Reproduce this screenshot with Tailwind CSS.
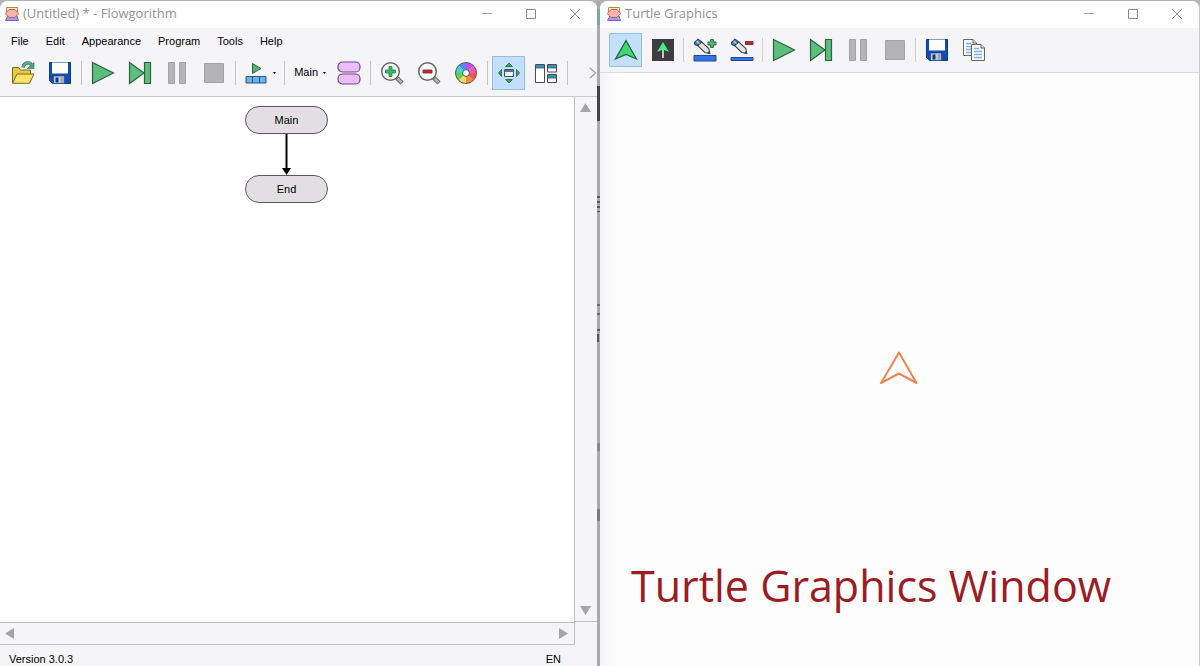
<!DOCTYPE html>
<html lang="en">
<head>
<meta charset="utf-8">
<meta name="viewport" content="width=device-width, initial-scale=1">
<title>Flowgorithm</title>
<script src="https://cdn.jsdelivr.net/npm/@tailwindcss/browser@4"></script>
</head>
<body class="h-screen overflow-hidden bg-[#b3b2b5] font-['Liberation_Sans',Arial,sans-serif] text-[11px] text-black">

<!-- Shared icons -->
<svg class="hidden" aria-hidden="true">
  <symbol id="logo" viewBox="0 0 14 14">
    <path d="M1.500 .5H12.500V6H1.500Z" fill="#fbf3a0" stroke="#b08a55"/>
    <path d="M3 9H12L13.500 13.500H.5Z" fill="#a99be8" stroke="#7564b8"/>
    <path d="M4 2.500H10L13.800 6.500L10 10.500H4L.2 6.500Z" fill="#fbb3ae" stroke="#b8605e"/>
  </symbol>
  <symbol id="min" viewBox="0 0 12 12"><path d="M1 5.500H11" stroke="#a3a3a3" fill="none"/></symbol>
  <symbol id="max" viewBox="0 0 12 12"><path d="M1.500 1.500H10.500V10.500H1.500Z" stroke="#8e8e8e" fill="none"/></symbol>
  <symbol id="close" viewBox="0 0 12 12"><path d="M1 1L11 11M11 1L1 11" stroke="#8e8e8e" fill="none"/></symbol>
  <symbol id="play" viewBox="0 0 24 24"><path d="M1.500 1.500L22.500 12L1.500 22.500Z" fill="#5cbf7c" stroke="#2d6140" stroke-width="1.200"/></symbol>
  <symbol id="step" viewBox="0 0 24 24"><path d="M1.500 1.500L16 12L1.500 22.500Z M16.500 1.500H22.500V22.500H16.500Z" fill="#5cbf7c" stroke="#2d6140" stroke-width="1.200"/></symbol>
  <symbol id="pause" viewBox="0 0 24 24"><path d="M3.500 1.500H9.500V22.500H3.500ZM14.500 1.500H20.500V22.500H14.500Z" fill="#b4b3b6" stroke="#a3a2a5"/></symbol>
  <symbol id="stop" viewBox="0 0 24 24"><path d="M2.500 2.500H21.500V21.500H2.500Z" fill="#b4b3b6" stroke="#a3a2a5"/></symbol>
  <symbol id="save" viewBox="0 0 24 24">
    <path d="M1.500 1.500H22.500V22.500H4.500L1.500 19.500Z" fill="#0f4fb0" stroke="#0b3a88"/>
    <path d="M4 1.500H20V12.500H4Z" fill="#fff"/>
    <path d="M5.500 15H16.500V22.500H5.500Z" fill="#c9cdd6" stroke="#0b3a88" stroke-width=".6"/>
    <path d="M7.500 16.500H10.500V21.500H7.500Z" fill="#0b3a88"/>
    <path d="M12.500 15.500H16V22H12.500Z" fill="#a3a9b6"/>
  </symbol>
  <symbol id="pen" viewBox="0 0 24 24">
    <path d="M4.500 7.500L8.500 3.800L15.800 10.500L16.800 15.500L11.800 14.500Z" fill="#e6e3dc" stroke="#3c4a60" stroke-width="1.100"/>
    <path d="M1.500 4.500L5 1.200L8.500 3.800L4.500 7.500L1.800 6.500Z" fill="#5b8fd0" stroke="#283e5e" stroke-width="1.100"/>
    <path d="M14 15.200L16.800 15.500L16.400 12.800Z" fill="#283e5e"/>
    <path d="M3.500 3L6.500 5.500" stroke="#dce9f8"/>
  </symbol>
</svg>

<div class="grid h-full grid-cols-[597fr_3fr_600fr] pt-px">

  <!-- Flowchart editor window -->
  <main class="flex min-w-0 flex-col overflow-hidden rounded-t-lg bg-[#f5f4f6]">
    <header class="flex h-[27px] shrink-0 items-center bg-white pb-0.5 pl-[5px]">
      <svg class="size-3.5"><use href="#logo"/></svg>
      <h1 class="ml-1 flex-1 font-['Open_Sans',sans-serif] text-[13px] whitespace-nowrap text-[#929292]">(Untitled) * - Flowgorithm</h1>
      <button aria-label="Minimize" class="grid h-full w-11 place-items-center"><svg class="size-3"><use href="#min"/></svg></button>
      <button aria-label="Maximize" class="grid h-full w-11 place-items-center"><svg class="size-3"><use href="#max"/></svg></button>
      <button aria-label="Close" class="grid h-full w-11 place-items-center"><svg class="size-3"><use href="#close"/></svg></button>
    </header>

    <nav class="flex h-[27px] shrink-0 items-center gap-px pl-[3px]">
      <button class="px-2">File</button>
      <button class="px-2">Edit</button>
      <button class="px-2">Appearance</button>
      <button class="px-2">Program</button>
      <button class="px-2">Tools</button>
      <button class="px-2">Help</button>
    </nav>

    <div role="toolbar" aria-label="Main toolbar" class="flex h-[42px] shrink-0 items-center gap-1 border-b border-[#c9c8cb] pb-1.5 pl-1.5">
      <button aria-label="Open" class="grid h-[34px] w-[33px] shrink-0 place-items-center">
        <svg class="size-6" viewBox="0 0 24 24">
          <path d="M1.500 22V6.500H7.500L9.500 9H19.500V13" fill="#e9c93f" stroke="#7b6a25"/>
          <path d="M1.500 22.300L6 13H23L18.500 22.300Z" fill="#fbe36b" stroke="#7b6a25"/>
          <path d="M12 6.500C13 1 19 .8 20.300 4" fill="none" stroke="#2f6f55" stroke-width="3.400"/>
          <path d="M12 6.300C13 1 19 .8 20.300 4" fill="none" stroke="#56b585" stroke-width="2"/>
          <path d="M16.500 7.500H23V1.500Z" fill="#4aa67a" stroke="#2f6f55" stroke-width=".6"/>
        </svg>
      </button>
      <button aria-label="Save" class="grid h-[34px] w-[33px] shrink-0 place-items-center"><svg class="size-6"><use href="#save"/></svg></button>
      <span class="ml-px h-6 w-px shrink-0 bg-[#c4c3c6]"></span>
      <button aria-label="Run" class="grid h-[34px] w-[33px] shrink-0 place-items-center"><svg class="size-6"><use href="#play"/></svg></button>
      <button aria-label="Step" class="grid h-[34px] w-[33px] shrink-0 place-items-center"><svg class="size-6"><use href="#step"/></svg></button>
      <button aria-label="Pause" disabled class="grid h-[34px] w-[33px] shrink-0 place-items-center"><svg class="size-6"><use href="#pause"/></svg></button>
      <button aria-label="Stop" disabled class="grid h-[34px] w-[33px] shrink-0 place-items-center"><svg class="size-6"><use href="#stop"/></svg></button>
      <span class="ml-px h-6 w-px shrink-0 bg-[#c4c3c6]"></span>
      <button aria-label="Speed" class="flex h-[34px] w-[39px] shrink-0 items-center justify-center gap-[5px]">
        <svg class="size-6" viewBox="0 0 24 24">
          <path d="M8.500 2.500L17 7.500L8.500 12.500Z" fill="#5cae7c" stroke="#2d6140"/>
          <path d="M2 15.500H22V22H2Z" fill="#6fb0f0" stroke="#2f5680"/>
          <path d="M8.500 15.500V22M15.500 15.500V22" stroke="#2f5680"/>
        </svg>
        <svg class="h-0.5 w-[3px]" viewBox="0 0 3 2"><path d="M0 0H3L1.500 2Z"/></svg>
      </button>
      <span class="ml-px h-6 w-px shrink-0 bg-[#c4c3c6]"></span>
      <button class="flex h-[34px] w-[39px] shrink-0 items-center justify-end gap-[5px] pr-0.5">Main
        <svg class="h-0.5 w-[3px]" viewBox="0 0 3 2"><path d="M0 0H3L1.500 2Z"/></svg>
      </button>
      <button aria-label="Functions" class="grid h-[34px] w-[33px] shrink-0 place-items-center">
        <svg class="size-6" viewBox="0 0 24 24" fill="#edbcfb" stroke="#6b4b78" stroke-width="1.200"><rect x="1" y="1" width="22" height="10" rx="4.500"/><rect x="1" y="13" width="22" height="10" rx="4.500"/></svg>
      </button>
      <span class="ml-px h-6 w-px shrink-0 bg-[#c4c3c6]"></span>
      <button aria-label="Zoom in" class="grid h-[34px] w-[33px] shrink-0 place-items-center">
        <svg class="size-6" viewBox="0 0 24 24">
          <path d="M17 17L22 22" stroke="#5a5a5a" stroke-width="4.500"/><path d="M17.500 17.500L21.500 21.500" stroke="#b5b4b0" stroke-width="2.500"/>
          <circle cx="10.500" cy="10.500" r="8.800" fill="#f8f8f6" stroke="#666" stroke-width="1.500"/>
          <path d="M9 5.500H12V9H15.500V12H12V15.500H9V12H5.500V9H9Z" fill="#36b865" stroke="#22814a" stroke-width=".8"/>
        </svg>
      </button>
      <button aria-label="Zoom out" class="grid h-[34px] w-[33px] shrink-0 place-items-center">
        <svg class="size-6" viewBox="0 0 24 24">
          <path d="M17 17L22 22" stroke="#5a5a5a" stroke-width="4.500"/><path d="M17.500 17.500L21.500 21.500" stroke="#b5b4b0" stroke-width="2.500"/>
          <circle cx="10.500" cy="10.500" r="8.800" fill="#f8f8f6" stroke="#666" stroke-width="1.500"/>
          <path d="M6 9H15V12H6Z" fill="#c4272f" stroke="#8a1d26" stroke-width=".8"/>
        </svg>
      </button>
      <button aria-label="Colors" class="grid h-[34px] w-[33px] shrink-0 place-items-center">
        <svg class="size-6" viewBox="0 0 24 24">
          <path d="M12 12L12 1.500A10.500 10.500 0 0 1 19.400 4.600Z" fill="#c14df0"/>
          <path d="M12 12L19.400 4.600A10.500 10.500 0 0 1 22.500 12Z" fill="#f254b8"/>
          <path d="M12 12L22.500 12A10.500 10.500 0 0 1 19.400 19.400Z" fill="#f0555a"/>
          <path d="M12 12L19.400 19.400A10.500 10.500 0 0 1 12 22.500Z" fill="#f58a42"/>
          <path d="M12 12L12 22.500A10.500 10.500 0 0 1 4.600 19.400Z" fill="#f7dc5a"/>
          <path d="M12 12L4.600 19.400A10.500 10.500 0 0 1 1.500 12Z" fill="#63cf5d"/>
          <path d="M12 12L1.500 12A10.500 10.500 0 0 1 4.600 4.600Z" fill="#43d4c4"/>
          <path d="M12 12L4.600 4.600A10.500 10.500 0 0 1 12 1.500Z" fill="#4a90f2"/>
          <circle cx="12" cy="12" r="10.500" fill="none" stroke="#555"/>
          <circle cx="12" cy="12" r="3.400" fill="#fff" stroke="#555"/>
        </svg>
      </button>
      <span class="ml-px h-6 w-px shrink-0 bg-[#c4c3c6]"></span>
      <button aria-label="Auto arrange" aria-pressed="true" class="grid h-[34px] w-[33px] shrink-0 place-items-center border border-[#92c0e8] bg-[#c2e0fb]">
        <svg class="size-6" viewBox="0 0 24 24">
          <path d="M8.500 5.500L12 2L15.500 5.500ZM8.500 18.500H15.500L12 22ZM4.500 8.500V15.500L1.500 12ZM19.500 8.500V15.500L22.500 12Z" fill="#3f9f6a" stroke="#245f45" stroke-width=".8"/>
          <path d="M7.500 8.500H16.500V15.500H7.500Z" fill="#f5f7fa" stroke="#4b535e"/><path d="M7.500 9H16.500V11H7.500Z" fill="#4b7396"/>
        </svg>
      </button>
      <button aria-label="Layout windows" class="grid h-[34px] w-[33px] shrink-0 place-items-center">
        <svg class="size-6" viewBox="0 0 24 24">
          <path d="M1.500 3.500H10.500V21.500H1.500ZM13.500 3.500H22.500V11H13.500ZM13.500 13.500H22.500V21.500H13.500Z" fill="#fff" stroke="#4b4b4b"/>
          <path d="M2 4H10V7H2ZM14 4H22V7H14ZM14 14H22V17H14Z" fill="#3690bd"/>
          <path d="M1.500 7H10.500M13.500 7H22.500M13.500 17H22.500" stroke="#33566b" stroke-width=".8"/>
        </svg>
      </button>
      <span class="ml-px h-6 w-px shrink-0 bg-[#c4c3c6]"></span>
      <button aria-label="More tools" class="ml-auto shrink-0"><svg class="h-3 w-2" viewBox="0 0 8 12"><path d="M1 1L6.500 6L1 11" fill="none" stroke="#a5a5a7" stroke-width="1.500"/></svg></button>
    </div>

    <div class="grid min-h-0 flex-1 grid-cols-[1fr_23px] grid-rows-[1fr_23px]">
      <section aria-label="Flowchart" class="flex flex-col items-center bg-[#fefefe] pt-[9px] pr-px">
        <button class="h-7 w-[83px] rounded-full border border-[#59595b] bg-[#e1dfe2]">Main</button>
        <svg class="h-[41px] w-[9px]" viewBox="0 0 9 41"><path d="M4.500 0V36" stroke="#000" stroke-width="2"/><path d="M0 34H9L4.500 41Z"/></svg>
        <button class="h-7 w-[83px] rounded-full border border-[#59595b] bg-[#e1dfe2]">End</button>
      </section>
      <div class="flex flex-col items-center justify-between border-b border-l border-[#bfbec1] pt-1.5 pr-0.5 pb-1.5">
        <button aria-label="Scroll up"><svg class="block h-[9px] w-[11px]" viewBox="0 0 11 9"><path d="M0 9L5.500 0L11 9Z" fill="#a5a4a7"/></svg></button>
        <button aria-label="Scroll down"><svg class="block h-[9px] w-[11px]" viewBox="0 0 11 9"><path d="M0 0L5.500 9L11 0Z" fill="#a5a4a7"/></svg></button>
      </div>
      <div class="flex items-center justify-between border-y border-[#bfbec1] pr-1.5 pl-[5px]">
        <button aria-label="Scroll left"><svg class="block h-[11px] w-[9px]" viewBox="0 0 9 11"><path d="M9 0L0 5.500L9 11Z" fill="#a5a4a7"/></svg></button>
        <button aria-label="Scroll right"><svg class="block h-[11px] w-[9px]" viewBox="0 0 9 11"><path d="M0 0L9 5.500L0 11Z" fill="#a5a4a7"/></svg></button>
      </div>
      <div class="border-l border-[#bfbec1]"></div>
    </div>

    <footer class="flex h-[21px] shrink-0 items-center justify-between pt-2 pr-9 pl-[9px]">
      <span>Version 3.0.3</span><span>EN</span>
    </footer>
  </main>

  <!-- Sliver of the page behind the two windows -->
  <div class="relative overflow-hidden bg-[#a9a8ab]">
    <i class="absolute top-2 h-4 w-full bg-[#7da3b8]"></i>
    <i class="absolute top-[85px] h-[35px] w-full bg-[#454348]"></i>
    <i class="absolute top-[195px] h-4 w-full bg-[repeating-linear-gradient(#59585b_0_2px,#a9a8ab_2px_5px)]"></i>
    <i class="absolute top-[303px] h-0.5 w-full bg-[#6b6a6d]"></i>
    <i class="absolute top-[312px] h-0.5 w-full bg-[#6b6a6d]"></i>
    <i class="absolute top-[328px] h-0.5 w-full bg-[#59585b]"></i>
    <i class="absolute top-[333px] h-2 w-0.5 bg-[#59585b]"></i>
    <i class="absolute top-[442px] h-2 w-full bg-[#8a898c]"></i>
    <i class="absolute top-[508px] h-3 w-full bg-[#7a797c]"></i>
  </div>

  <!-- Turtle graphics window -->
  <aside class="flex min-w-0 flex-col overflow-hidden rounded-t-lg border-r border-[#c9c8cb] bg-[#fefdfe]">
    <header class="flex h-[27px] shrink-0 items-center bg-white pb-0.5 pl-[7px]">
      <svg class="size-3.5"><use href="#logo"/></svg>
      <h2 class="ml-1 flex-1 font-['Open_Sans',sans-serif] text-[13px] whitespace-nowrap text-[#929292]">Turtle Graphics</h2>
      <button aria-label="Minimize" class="grid h-full w-11 place-items-center"><svg class="size-3"><use href="#min"/></svg></button>
      <button aria-label="Maximize" class="grid h-full w-11 place-items-center"><svg class="size-3"><use href="#max"/></svg></button>
      <button aria-label="Close" class="grid h-full w-11 place-items-center"><svg class="size-3"><use href="#close"/></svg></button>
    </header>

    <div role="toolbar" aria-label="Turtle toolbar" class="flex h-[45px] shrink-0 items-center gap-1 border-b border-[#dddcde] bg-[#f5f4f6] pl-[9px]">
      <button aria-label="Show turtle" aria-pressed="true" class="grid h-[34px] w-[33px] shrink-0 place-items-center border border-[#92c0e8] bg-[#c2e0fb]">
        <svg class="size-6" viewBox="0 0 24 24"><path d="M12 2.500L22.500 21L12 16.500L1.500 21Z" fill="#3fd673" stroke="#23613c" stroke-width="1.200"/></svg>
      </button>
      <button aria-label="Dark background" class="grid h-[34px] w-[33px] shrink-0 place-items-center">
        <svg class="size-6" viewBox="0 0 24 24"><path d="M1 1H23V23H1Z" fill="#3f3c40"/><path d="M12 10V20" stroke="#e9f5ec" stroke-width="1.500"/><path d="M12 4L18 14L12 11.500L6 14Z" fill="#3ff083"/></svg>
      </button>
      <span class="h-6 w-px shrink-0 bg-[#d0cfd2]"></span>
      <button aria-label="Thicker pen" class="grid h-[34px] w-[33px] shrink-0 place-items-center">
        <svg class="size-6" viewBox="0 0 24 24"><use href="#pen" width="24" height="24"/>
          <path d="M17.500 1.500H20.500V4H23V7H20.500V9.500H17.500V7H15V4H17.500Z" fill="#4fb76f" stroke="#2d6140" stroke-width=".9"/>
          <path d="M1 17.500H23V23H1Z" fill="#3474e6" stroke="#234a94"/></svg>
      </button>
      <button aria-label="Thinner pen" class="grid h-[34px] w-[33px] shrink-0 place-items-center">
        <svg class="size-6" viewBox="0 0 24 24"><use href="#pen" width="24" height="24"/>
          <path d="M15.500 3.500H23V6.500H15.500Z" fill="#b52c38" stroke="#7c2530" stroke-width=".9"/>
          <path d="M1 19.500H23V22.500H1Z" fill="#3474e6" stroke="#234a94"/></svg>
      </button>
      <span class="h-6 w-px shrink-0 bg-[#d0cfd2]"></span>
      <button aria-label="Run" class="grid h-[34px] w-[33px] shrink-0 place-items-center"><svg class="size-6"><use href="#play"/></svg></button>
      <button aria-label="Step" class="grid h-[34px] w-[33px] shrink-0 place-items-center"><svg class="size-6"><use href="#step"/></svg></button>
      <button aria-label="Pause" disabled class="grid h-[34px] w-[33px] shrink-0 place-items-center"><svg class="size-6"><use href="#pause"/></svg></button>
      <button aria-label="Stop" disabled class="grid h-[34px] w-[33px] shrink-0 place-items-center"><svg class="size-6"><use href="#stop"/></svg></button>
      <span class="h-6 w-px shrink-0 bg-[#d0cfd2]"></span>
      <button aria-label="Save" class="grid h-[34px] w-[33px] shrink-0 place-items-center"><svg class="size-6"><use href="#save"/></svg></button>
      <button aria-label="Copy" class="grid h-[34px] w-[33px] shrink-0 place-items-center">
        <svg class="size-6" viewBox="0 0 24 24">
          <path d="M1.500 1.500H11L14.500 5V17.500H1.500Z" fill="#fbfbfb" stroke="#666"/><path d="M11 1.500V5H14.500" fill="#ddd" stroke="#666"/>
          <path d="M4 5.500H9M4 8.500H9M4 11.500H9M4 14.500H9" stroke="#7db3de" stroke-width="1.300"/>
          <path d="M9.500 6.500H19L22.500 10V22.500H9.500Z" fill="#fbfbfb" stroke="#666"/><path d="M19 6.500V10H22.500" fill="#ddd" stroke="#666"/>
          <path d="M12 10.500H17M12 13.500H20M12 16.500H20M12 19.500H20" stroke="#7db3de" stroke-width="1.300"/>
        </svg>
      </button>
    </div>

    <section aria-label="Turtle canvas" class="relative grid flex-1 place-items-center bg-linear-to-r from-[#f4f3f6] to-[#fefdfe] to-[18px] pr-px">
      <svg class="h-[38px] w-10" viewBox="0 0 40 38"><path d="M20 1.500L37.500 32L20 22.500L2 32Z" fill="none" stroke="#ee8550" stroke-width="2" stroke-linejoin="round"/></svg>
      <p class="absolute bottom-[50px] left-[31px] font-['Open_Sans',sans-serif] text-[43px] leading-[60px] whitespace-nowrap text-[#9c1c24]">Turtle Graphics Window</p>
    </section>
  </aside>
</div>
</body>
</html>
